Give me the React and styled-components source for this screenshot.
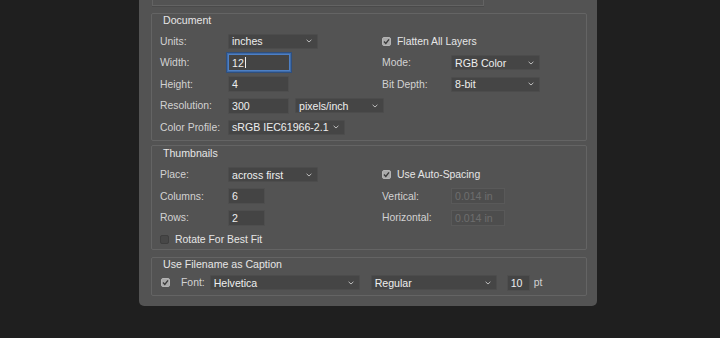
import React from "react";
import styled, { createGlobalStyle } from "styled-components";

const Global = createGlobalStyle`
  html, body { margin: 0; padding: 0; background: #1f1f1f; }
  body { width: 720px; height: 338px; overflow: hidden; font-family: "Liberation Sans", Arial, sans-serif; }
`;

const Stage = styled.div`
  width: 720px;
  height: 338px;
  background: #1f1f1f;
  padding-left: 139px;
  box-sizing: border-box;
`;

const Dialog = styled.div`
  width: 458px;
  height: 306px;
  background: #535353;
  border-radius: 0 0 5px 5px;
  box-sizing: border-box;
  padding: 0 10px 0 12px;
  display: flex;
  flex-direction: column;
  font-size: 10.4px;
  color: #d6d6d6;
`;

const PrevGroup = styled.div`
  width: 332px;
  height: 6px;
  margin-left: 1px;
  box-sizing: border-box;
  border: 1px solid #636363;
  border-top: none;
  box-shadow: 0 1px 0 #4a4a4a;
`;

const Group = styled.div`
  width: 436px;
  box-sizing: border-box;
  border: 1px solid #646464;
  border-radius: 2px;
  margin-top: ${(p) => p.$mt}px;
  height: ${(p) => p.$h}px;
  padding: 0 0 0 8px;
  display: flex;
  flex-direction: column;
`;

const GroupTitle = styled.div`
  height: 12px;
  line-height: 12px;
  margin-top: ${(p) => p.$mt}px;
  padding-left: 3px;
  color: #e6e6e6;
  font-size: 10.6px;
`;

const Grid = styled.div`
  display: grid;
  grid-template-columns: 222px 1fr;
  grid-auto-rows: 21.5px;
  margin-top: ${(p) => p.$mt}px;
`;

const Field = styled.div`
  display: grid;
  grid-template-columns: ${(p) => p.$label || 68}px auto;
  align-items: center;
  grid-column: ${(p) => p.$col || "auto"};
`;

const Controls = styled.div`
  display: flex;
  align-items: center;
  gap: 6px;
`;

const Label = styled.span`
  color: #d2d2d2;
  white-space: nowrap;
`;

const SelectBox = styled.div`
  width: ${(p) => p.$w}px;
  height: 15px;
  box-sizing: border-box;
  background: #454545;
  border: 1px solid #4c4c4c;
  border-radius: 1px;
  display: flex;
  align-items: center;
  justify-content: space-between;
  padding: 0 5px 0 3px;
  color: #eeeeee;
  font-size: 10.6px;
`;

const Input = styled.div`
  width: ${(p) => p.$w}px;
  height: 16px;
  box-sizing: border-box;
  background: ${(p) => (p.$disabled ? "#4d4d4d" : "#444444")};
  border: 1px solid ${(p) => (p.$disabled ? "#595959" : "#4e4e4e")};
  display: flex;
  align-items: center;
  padding-left: 3px;
  color: ${(p) => (p.$disabled ? "#6d6d6d" : "#eeeeee")};
  font-size: 10.6px;
  ${(p) =>
    p.$focus &&
    `box-shadow: 0 0 0 1px #3d6aa8, 0 0 0 2px #2f4f7d; border-color: #4d7fc4; height: 17px; width: ${p.$w + 1}px;`}
`;

const Caret = styled.span`
  display: inline-block;
  width: 1px;
  height: 11px;
  background: #f0f0f0;
  margin-left: 1px;
`;

const CheckRow = styled.div`
  display: flex;
  align-items: center;
  gap: 6px;
  grid-column: ${(p) => p.$col || "auto"};
  color: #e6e6e6;
`;

const Box = styled.span`
  width: 9px;
  height: 9px;
  box-sizing: border-box;
  border-radius: 2px;
  background: ${(p) => (p.$on ? "#a9a9a9" : "#474747")};
  border: 1px solid ${(p) => (p.$on ? "#b4b4b4" : "#3e3e3e")};
  display: flex;
  align-items: center;
  justify-content: center;
`;

const CaptionRow = styled.div`
  display: flex;
  align-items: center;
  margin-top: 4px;
  padding-left: 1px;
  height: 17px;
`;

const Gap = styled.span`
  width: ${(p) => p.$w}px;
  flex: none;
`;

const Chevron = () => (
  <svg width="6" height="4" viewBox="0 0 6 4">
    <path d="M0.6 0.8 L3 3 L5.4 0.8" fill="none" stroke="#bdbdbd" strokeWidth="1" />
  </svg>
);

const Check = ({ on }) => (
  <Box $on={on}>
    {on && (
      <svg width="7" height="7" viewBox="0 0 7 7">
        <path d="M1 3.6 L2.8 5.4 L6 1.4" fill="none" stroke="#3a3a3a" strokeWidth="1.4" />
      </svg>
    )}
  </Box>
);

const Select = ({ w, children }) => (
  <SelectBox $w={w}>
    <span>{children}</span>
    <Chevron />
  </SelectBox>
);

export default function App() {
  return (
    <>
      <Global />
      <Stage>
        <Dialog>
          <PrevGroup />
          <Group $mt={7} $h={128}>
            <GroupTitle $mt={0}>Document</GroupTitle>
            <Grid $mt={4.5}>
              <Field>
                <Label>Units:</Label>
                <Select w={90}>inches</Select>
              </Field>
              <CheckRow>
                <Check on />
                <span>Flatten All Layers</span>
              </CheckRow>
              <Field>
                <Label>Width:</Label>
                <Input $w={61} $focus>
                  12<Caret />
                </Input>
              </Field>
              <Field $label={69}>
                <Label>Mode:</Label>
                <Select w={89}>RGB Color</Select>
              </Field>
              <Field>
                <Label>Height:</Label>
                <Input $w={61}>4</Input>
              </Field>
              <Field $label={69}>
                <Label>Bit Depth:</Label>
                <Select w={89}>8-bit</Select>
              </Field>
              <Field $col="1 / span 2">
                <Label>Resolution:</Label>
                <Controls>
                  <Input $w={61}>300</Input>
                  <Select w={89}>pixels/inch</Select>
                </Controls>
              </Field>
              <Field $col="1 / span 2">
                <Label>Color Profile:</Label>
                <Select w={117}>sRGB IEC61966-2.1</Select>
              </Field>
            </Grid>
          </Group>
          <Group $mt={4} $h={105}>
            <GroupTitle $mt={1}>Thumbnails</GroupTitle>
            <Grid $mt={5}>
              <Field>
                <Label>Place:</Label>
                <Select w={90}>across first</Select>
              </Field>
              <CheckRow>
                <Check on />
                <span>Use Auto-Spacing</span>
              </CheckRow>
              <Field>
                <Label>Columns:</Label>
                <Input $w={37}>6</Input>
              </Field>
              <Field $label={69}>
                <Label>Vertical:</Label>
                <Input $w={54} $disabled>0.014 in</Input>
              </Field>
              <Field>
                <Label>Rows:</Label>
                <Input $w={37}>2</Input>
              </Field>
              <Field $label={69}>
                <Label>Horizontal:</Label>
                <Input $w={54} $disabled>0.014 in</Input>
              </Field>
              <CheckRow $col="1 / span 2">
                <Check />
                <span>Rotate For Best Fit</span>
              </CheckRow>
            </Grid>
          </Group>
          <Group $mt={7} $h={39}>
            <GroupTitle $mt={0}>Use Filename as Caption</GroupTitle>
            <CaptionRow>
              <Check on />
              <Gap $w={11} />
              <Label>Font:</Label>
              <Gap $w={5} />
              <Select w={150}>Helvetica</Select>
              <Gap $w={11} />
              <Select w={126}>Regular</Select>
              <Gap $w={10} />
              <Input $w={23}>10</Input>
              <Gap $w={4} />
              <Label>pt</Label>
            </CaptionRow>
          </Group>
        </Dialog>
      </Stage>
    </>
  );
}
